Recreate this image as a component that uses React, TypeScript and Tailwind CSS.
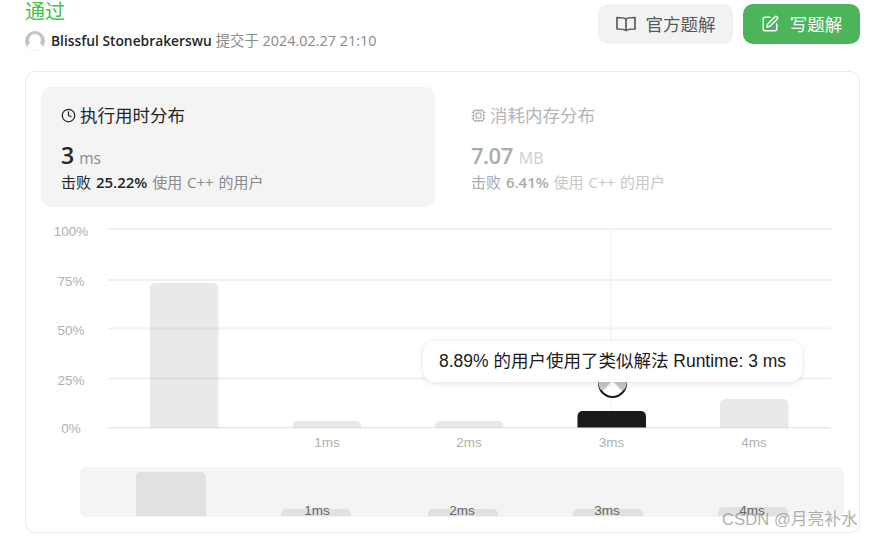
import { Clock, Cpu, SquarePen } from "lucide-react";

const sans = "font-['Open_Sans','Noto_Sans_CJK_SC',sans-serif]";

function Chart() {
  const grid = [
    [229, "100%", 71, 231],
    [280, "75%", 71, 281],
    [328.5, "50%", 71, 330],
    [378.5, "25%", 71, 380],
  ] as const;
  const axis = [
    [327, "1ms"],
    [469, "2ms"],
    [611.5, "3ms"],
    [754, "4ms"],
  ] as const;
  const mini = [
    [317, "1ms"],
    [462, "2ms"],
    [607, "3ms"],
    [752, "4ms"],
  ] as const;
  return (
    <svg viewBox="26 207 833 325" className="block w-[833px] h-[325px]" fontFamily="'Liberation Sans', sans-serif">
      {grid.map(([y]) => (
        <rect key={y} x="107" y={y - 1} width="724" height="2" fill="#f1f1f1" />
      ))}
      <rect x="107" y="427" width="724" height="1.5" fill="#e9e9e9" />
      <rect x="610.5" y="229" width="1" height="198" fill="#f0f0f0" />
      {grid.map(([y, label, x, ty]) => (
        <text key={label} x={x} y={ty + 4.5} fontSize="13.5" fill="#b0b0b0" textAnchor="middle">
          {label}
        </text>
      ))}
      <text x="71" y="432.5" fontSize="13.5" fill="#b0b0b0" textAnchor="middle">
        0%
      </text>
      <path d="M150 427.5V288a5 5 0 0 1 5-5h58.500a5 5 0 0 1 5 5v139.500z" fill="#000" fillOpacity="0.085" />
      <path d="M292.500 427.500V426a5 5 0 0 1 5-5h58.500a5 5 0 0 1 5 5v1.500z" fill="#000" fillOpacity="0.085" />
      <path d="M435 427.500V426a5 5 0 0 1 5-5h58.500a5 5 0 0 1 5 5v1.500z" fill="#000" fillOpacity="0.085" />
      <path d="M577.500 427.500V416a5 5 0 0 1 5-5h58.500a5 5 0 0 1 5 5v11.500z" fill="#1a1a1a" />
      <path d="M720 427.500V404a5 5 0 0 1 5-5h58.500a5 5 0 0 1 5 5v23.500z" fill="#000" fillOpacity="0.085" />
      <circle cx="612.500" cy="383.500" r="13.500" fill="#fff" stroke="#1a1a1a" strokeWidth="2" />
      <path d="M600 376h8l3 6-7 8h-3a13 13 0 0 1-1-14zM625 376h-8l-3 6 7 8h3a13 13 0 0 0 1-14z" fill="#c6c6c6" />
      {axis.map(([x, label]) => (
        <text key={label} x={x} y="447" fontSize="13.500" fill="#b0b0b0" textAnchor="middle">
          {label}
        </text>
      ))}
      <rect x="80" y="467" width="764" height="50" rx="6" fill="#f4f4f4" />
      <path d="M136 516V477a5 5 0 0 1 5-5h60a5 5 0 0 1 5 5v39z" fill="#e1e1e1" />
      <path d="M281 516V514a5 5 0 0 1 5-5h60a5 5 0 0 1 5 5v2z" fill="#e1e1e1" />
      <path d="M428 516V514a5 5 0 0 1 5-5h60a5 5 0 0 1 5 5v2z" fill="#e1e1e1" />
      <path d="M573 516V514a5 5 0 0 1 5-5h60a5 5 0 0 1 5 5v2z" fill="#e1e1e1" />
      <path d="M718 516V512a5 5 0 0 1 5-5h60a5 5 0 0 1 5 5v4z" fill="#e1e1e1" />
      {mini.map(([x, label]) => (
        <text key={label} x={x} y="515" fontSize="13.500" fill="#666" textAnchor="middle">
          {label}
        </text>
      ))}
    </svg>
  );
}

export default function App() {
  return (
    <div className={`relative w-[874px] h-[536px] overflow-hidden bg-white ${sans}`}>
      <div className="flex justify-between pl-[25px] pr-[14px] pt-[4px]">
        <div>
          <div className="-mt-[2px] text-[20px] leading-[20px] text-[#45c04f] font-['Liberation_Sans','Noto_Sans_CJK_SC',sans-serif]">通过</div>
          <div className="flex items-center mt-[9px] h-[20px]">
            <div className="w-[20px] h-[20px] rounded-full bg-[#c4c4c4] overflow-hidden mr-[6px] flex justify-center relative">
              <div className="absolute top-[3px] w-[12px] h-[12px] rounded-full bg-white" />
              <div className="absolute top-[12px] w-[16px] h-[10px] rounded-full bg-white" />
            </div>
            <span className="text-[13.8px] font-semibold text-[#262626]">Blissful Stonebrakerswu</span>
            <span className="text-[14.4px] ml-[4px] text-[#8a8a8a]">提交于 2024.02.27 21:10</span>
          </div>
        </div>
        <div className="flex gap-[10px]">
          <div className="w-[135px] h-[40px] rounded-[10px] bg-[#f0f2f4] flex items-center justify-center gap-[10px] text-[17.5px] text-[#5a5a5a]">
            <svg viewBox="0 0 20 16" width="20" height="16" fill="none" stroke="#5c5c5c" strokeWidth="1.700" strokeLinejoin="round">
              <path d="M10 3.200C8.500 1.800 6.500 1.500 1 1.500v11.500c5.500 0 7.500.3 9 1.700 1.500-1.400 3.500-1.700 9-1.700V1.500c-5.500 0-7.500.3-9 1.700zM10 3.200v11.500" />
            </svg>
            <span>官方题解</span>
          </div>
          <div className="w-[117px] h-[40px] rounded-[10px] bg-[#4cb55b] flex items-center justify-center gap-[11px] text-[17.5px] text-white">
            <SquarePen size={18} strokeWidth={2} />
            <span>写题解</span>
          </div>
        </div>
      </div>

      <div className="ml-[25px] mt-[20px] w-[835px] h-[462px] rounded-[10px] border border-[#ebebeb]">
        <div className="flex pt-[15px] pl-[15px]">
          <div className="w-[394px] h-[120px] rounded-[10px] bg-[#f4f4f4] pl-[20px] pt-[17px]">
            <div className="flex items-center gap-[4px] text-[17.5px] leading-[22px] text-[#262626]">
              <Clock size={15} strokeWidth={2} />
              <span>执行用时分布</span>
            </div>
            <div className="flex items-baseline gap-[5px] mt-[15px] leading-[28px]">
              <span className="text-[23px] font-semibold text-[#262626]">3</span>
              <span className="text-[15.5px] text-[#8a8a8a]">ms</span>
            </div>
            <div className="text-[15px] [word-spacing:1px] leading-[18px] mt-[1px] text-[#8a8a8a]">
              <span className="text-[#262626]">击败 <span className="font-semibold">25.22%</span></span> 使用 C++ 的用户
            </div>
          </div>
          <div className="pl-[36px] pt-[17px]">
            <div className="flex items-center gap-[4px] text-[17.5px] leading-[22px] text-[#b5b5b5]">
              <Cpu size={15} strokeWidth={2} />
              <span>消耗内存分布</span>
            </div>
            <div className="flex items-baseline gap-[6px] mt-[15px] leading-[28px]">
              <span className="text-[22px] font-semibold tracking-[-0.5px] text-[#ababab]">7.07</span>
              <span className="text-[16px] text-[#cfcfcf]">MB</span>
            </div>
            <div className="text-[15px] [word-spacing:1px] leading-[18px] mt-[1px] text-[#c8c8c8]">
              <span className="text-[#ababab]">击败 <span className="font-semibold">6.41%</span></span> 使用 C++ 的用户
            </div>
          </div>
        </div>
        <Chart />
      </div>

      <div className="absolute left-[423px] top-[341px] w-[379px] h-[41px] rounded-[12px] bg-white shadow-[0_1px_6px_rgba(0,0,0,0.12)] flex items-center justify-center text-[17.5px] text-[#1a1a1a] font-['Liberation_Sans','Noto_Sans_CJK_SC',sans-serif] whitespace-nowrap">
        8.89% 的用户使用了类似解法 Runtime: 3 ms
      </div>
      <div className="absolute left-[722px] top-[509px] text-[16.7px] leading-[22px] text-[#9a9a9a]/80 font-['Liberation_Sans','Noto_Sans_CJK_SC',sans-serif] whitespace-nowrap">
        CSDN @月亮补水
      </div>
    </div>
  );
}
